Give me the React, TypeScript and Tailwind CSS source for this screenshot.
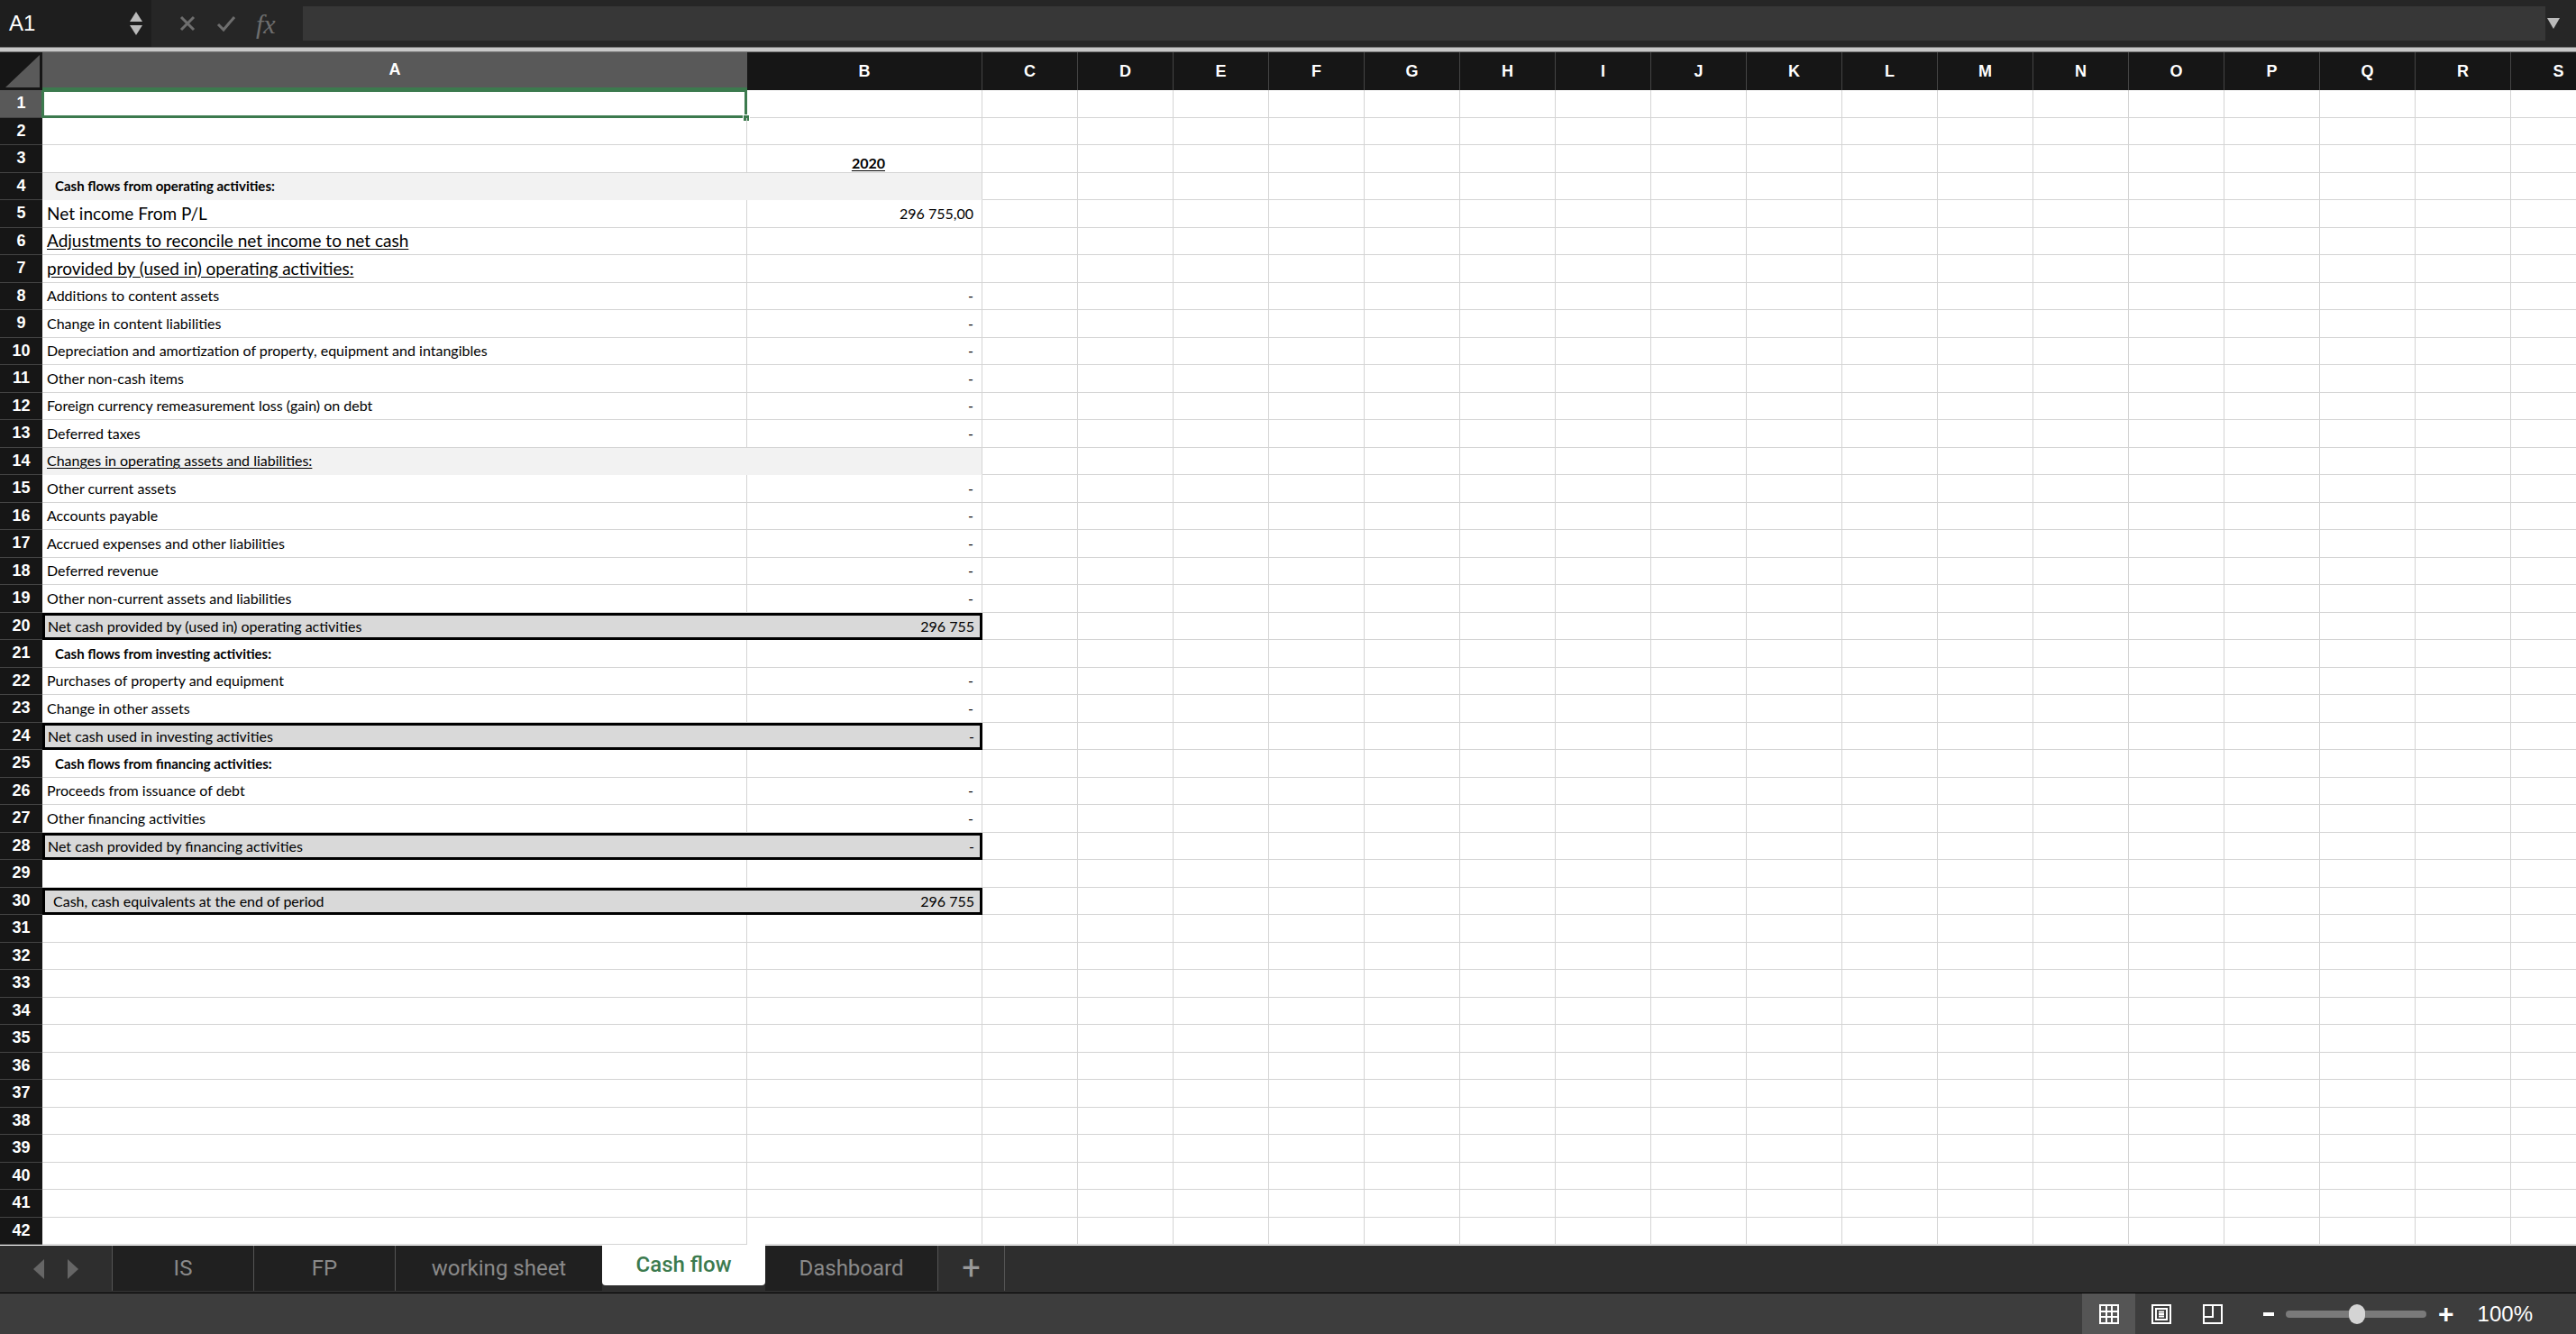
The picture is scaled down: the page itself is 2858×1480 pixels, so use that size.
import React from "react";

const cols = ["C", "D", "E", "F", "G", "H", "I", "J", "K", "L", "M", "N", "O", "P", "Q", "R", "S"];

type Row = {
  a?: string;
  b?: string;
  kind?: "big" | "bigU" | "head" | "shade" | "box" | "small" | "year";
};

const rows: Row[] = [
  {},
  {},
  { b: "2020", kind: "year" },
  { a: "Cash flows from operating activities:", kind: "head" },
  { a: "Net income From P/L", b: "296 755,00", kind: "big" },
  { a: "Adjustments to reconcile net income to net cash", kind: "bigU" },
  { a: "provided by (used in) operating activities:", kind: "bigU" },
  { a: "Additions to content assets", b: "-" },
  { a: "Change in content liabilities", b: "-" },
  { a: "Depreciation and amortization of property, equipment and intangibles", b: "-" },
  { a: "Other non-cash items", b: "-" },
  { a: "Foreign currency remeasurement loss (gain) on debt", b: "-" },
  { a: "Deferred taxes", b: "-" },
  { a: "Changes in operating assets and liabilities:", kind: "shade" },
  { a: "Other current assets", b: "-" },
  { a: "Accounts payable", b: "-" },
  { a: "Accrued expenses and other liabilities", b: "-" },
  { a: "Deferred revenue", b: "-" },
  { a: "Other non-current assets and liabilities", b: "-" },
  { a: "Net cash provided by (used in) operating activities", b: "296 755", kind: "box" },
  { a: "Cash flows from investing activities:", kind: "small" },
  { a: "Purchases of property and equipment", b: "-" },
  { a: "Change in other assets", b: "-" },
  { a: "Net cash used in investing activities", b: "-", kind: "box" },
  { a: "Cash flows from financing activities:", kind: "small" },
  { a: "Proceeds from issuance of debt", b: "-" },
  { a: "Other financing activities", b: "-" },
  { a: "Net cash provided by financing activities", b: "-", kind: "box" },
  {},
  { a: "Cash, cash equivalents at the end of period", b: "296 755", kind: "box" },
];
while (rows.length < 42) rows.push({});

const cellFont = { fontFamily: "Lato, 'Open Sans', sans-serif" };

function GridCols() {
  return (
    <>
      {cols.map((c) => (
        <div key={c} className="h-full w-[106px] shrink-0 border-r border-b border-[#d4d4d4]" />
      ))}
    </>
  );
}

function SheetRow({ r, i }: { r: Row; i: number }) {
  const n = i + 1;
  const sel = n === 1;
  const header = (
    <div
      className={`flex h-full w-[47px] shrink-0 items-center justify-center border-b border-[#444] text-[18px] font-bold text-white ${sel ? "bg-[#595959]" : "bg-[#161616]"}`}
      style={{ fontFamily: "'Liberation Sans', sans-serif" }}
    >
      {n}
    </div>
  );

  if (r.kind === "box") {
    return (
      <div className="flex h-[30.5px]">
        {header}
        <div className="flex w-[1043px] shrink-0 items-center justify-between border-[3px] border-black bg-[#d9d9d9] pr-[6px] pl-[3px] text-[16px] text-black" style={cellFont}>
          <span className={n === 30 ? "pl-[6px]" : ""}>{r.a}</span>
          <span>{r.b}</span>
        </div>
        <GridCols />
      </div>
    );
  }

  const shade = r.kind === "head" || r.kind === "shade";
  let aCls = "text-[16px]";
  if (r.kind === "head") aCls = "text-[15px] font-bold pl-[9px]";
  if (r.kind === "small") aCls = "text-[15px] font-bold pl-[9px]";
  if (r.kind === "big") aCls = "text-[19px]";
  if (r.kind === "bigU") aCls = "text-[19px] underline underline-offset-2";
  if (r.kind === "shade") aCls = "text-[16px] underline underline-offset-2";

  return (
    <div className="flex h-[30.5px]">
      {header}
      <div className={`relative flex w-[782px] shrink-0 items-center border-b pl-[5px] text-black ${shade ? "border-[#f2f2f2] bg-[#f2f2f2]" : "border-r border-[#d4d4d4]"}`} style={cellFont}>
        <span className={aCls}>{r.a}</span>
        {sel && (
          <>
            <div className="absolute -top-px -left-px h-[calc(100%+2px)] w-[calc(100%+2px)] border-[3px] border-[#3c7a4e]" />
            <div className="absolute -right-[4px] -bottom-[5px] h-[8px] w-[8px] border border-white bg-[#3c7a4e]" />
          </>
        )}
      </div>
      <div className={`flex w-[261px] shrink-0 items-center justify-end border-r border-b pr-[9px] text-black ${shade ? "border-[#f2f2f2] bg-[#f2f2f2] border-r-[#d4d4d4]" : "border-[#d4d4d4]"}`} style={cellFont}>
        {r.kind === "year" ? (
          <span className="mr-[98px] mt-[10px] text-[16px] font-bold underline underline-offset-2">{r.b}</span>
        ) : (
          <span className="text-[16px]">{r.b}</span>
        )}
      </div>
      <GridCols />
    </div>
  );
}

export default function App() {
  const sans = { fontFamily: "'Liberation Sans', Arial, sans-serif" };
  return (
    <div className="flex h-[1480px] w-[2858px] flex-col overflow-hidden bg-white" style={sans}>
      {/* formula bar */}
      <div className="flex h-[52px] shrink-0 items-center bg-[#262626] pr-[18px]">
        <div className="flex h-full w-[168px] items-center justify-between bg-[#1e1e1e] pr-[10px] pl-[10px]">
          <span className="text-[24px] text-white">A1</span>
          <div className="flex flex-col items-center gap-[4px] text-[#bbb]">
            <svg width="14" height="11" viewBox="0 0 14 11"><path d="M7 0L14 11H0z" fill="currentColor" /></svg>
            <svg width="14" height="11" viewBox="0 0 14 11"><path d="M0 0H14L7 11z" fill="currentColor" /></svg>
          </div>
        </div>
        <div className="flex items-center gap-[22px] px-[30px] text-[#6e6e6e]">
          <svg width="20" height="20" viewBox="0 0 20 20"><path d="M3 3L17 17M17 3L3 17" stroke="currentColor" strokeWidth="3" /></svg>
          <svg width="22" height="20" viewBox="0 0 22 20"><path d="M2 11L8 17L20 3" stroke="currentColor" strokeWidth="3" fill="none" /></svg>
          <span className="text-[30px] italic" style={{ fontFamily: "'Liberation Serif', serif" }}>fx</span>
        </div>
        <div className="h-[38px] flex-1 bg-[#373737]" />
        <svg className="ml-[2px]" width="14" height="12" viewBox="0 0 14 12"><path d="M0 0H14L7 12z" fill="#bbb" /></svg>
      </div>
      <div className="h-[6px] shrink-0 border-y border-[#777] bg-[#c8c8c8]" />
      {/* column headers */}
      <div className="flex h-[42px] shrink-0 text-[18px] font-bold text-white">
        <div className="relative w-[47px] shrink-0 bg-[#161616]">
          <svg className="absolute right-[3px] bottom-[3px]" width="38" height="36" viewBox="0 0 38 36"><path d="M38 0V36H0z" fill="#5a5a5a" /></svg>
        </div>
        <div className="flex w-[782px] shrink-0 items-center justify-center border-b-[3px] border-[#3c7a4e] bg-[#595959]">A</div>
        <div className="flex w-[261px] shrink-0 items-center justify-center border-r border-[#444] bg-[#161616]">B</div>
        {cols.map((c) => (
          <div key={c} className="flex w-[106px] shrink-0 items-center justify-center border-r border-[#444] bg-[#161616]">{c}</div>
        ))}
      </div>
      {/* grid */}
      <div className="min-h-0 flex-1 overflow-hidden">
        {rows.map((r, i) => (
          <SheetRow key={i} r={r} i={i} />
        ))}
      </div>
      {/* tabs */}
      <div className="flex h-[53px] shrink-0 border-b border-black bg-[#2e2e2e] text-[24px]" style={{ fontFamily: "Roboto, 'Liberation Sans', sans-serif" }}>
        <div className="flex w-[124px] items-center justify-center gap-[26px] text-[#666]">
          <svg width="12" height="22" viewBox="0 0 12 22"><path d="M12 0V22L0 11z" fill="currentColor" /></svg>
          <svg width="12" height="22" viewBox="0 0 12 22"><path d="M0 0V22L12 11z" fill="currentColor" /></svg>
        </div>
        {["IS", "FP", "working sheet"].map((t, i) => (
          <div key={t} className={`mb-[2px] flex items-center justify-center border-l border-[#555] bg-[#202020] text-[#8a8a8a] ${i === 2 ? "w-[230px]" : "w-[157px]"}`}>{t}</div>
        ))}
        <div className="-mt-[2px] mb-[8px] flex w-[181px] items-center justify-center rounded-b-[4px] bg-white font-medium text-[#3c7a4e]">Cash flow</div>
        <div className="mb-[2px] flex w-[191px] items-center justify-center bg-[#202020] text-[#8a8a8a]">Dashboard</div>
        <div className="mb-[2px] flex w-[75px] items-center justify-center border-x border-[#555] text-[36px] text-[#999]">+</div>
        <div className="flex-1 bg-[#2e2e2e]" />
      </div>
      <div className="flex h-[45px] shrink-0 items-center justify-end bg-[#3d3d3d] pr-[48px] text-white">
        <div className="flex h-full w-[59px] items-center justify-center bg-[#555]">
          <svg width="22" height="22" viewBox="0 0 22 22" fill="none" stroke="white" strokeWidth="2"><rect x="1" y="1" width="20" height="20" /><path d="M8 1V21M14 1V21M1 8H21M1 14H21" /></svg>
        </div>
        <div className="flex w-[57px] justify-center">
          <svg width="22" height="22" viewBox="0 0 22 22" fill="none" stroke="white" strokeWidth="2"><rect x="1" y="1" width="20" height="20" /><rect x="5" y="5" width="12" height="12" /><path d="M8 8.5H14M8 11H14M8 13.5H14" /></svg>
        </div>
        <div className="flex w-[57px] justify-center">
          <svg width="22" height="22" viewBox="0 0 22 22" fill="none" stroke="white" strokeWidth="2"><rect x="1" y="1" width="20" height="20" /><path d="M1 14H11V1M11 1V14" /></svg>
        </div>
        <div className="ml-[28px] h-[4px] w-[12px] bg-white" />
        <div className="relative ml-[13px] h-[8px] w-[156px] rounded-full bg-[#7a7a7a]">
          <div className="absolute top-1/2 left-[70px] h-[22px] w-[18px] -translate-y-1/2 rounded-full bg-[#d4d4d4]" />
        </div>
        <span className="ml-[13px] text-[30px] font-bold leading-none">+</span>
        <span className="ml-[26px] text-[24px]">100%</span>
      </div>
    </div>
  );
}
